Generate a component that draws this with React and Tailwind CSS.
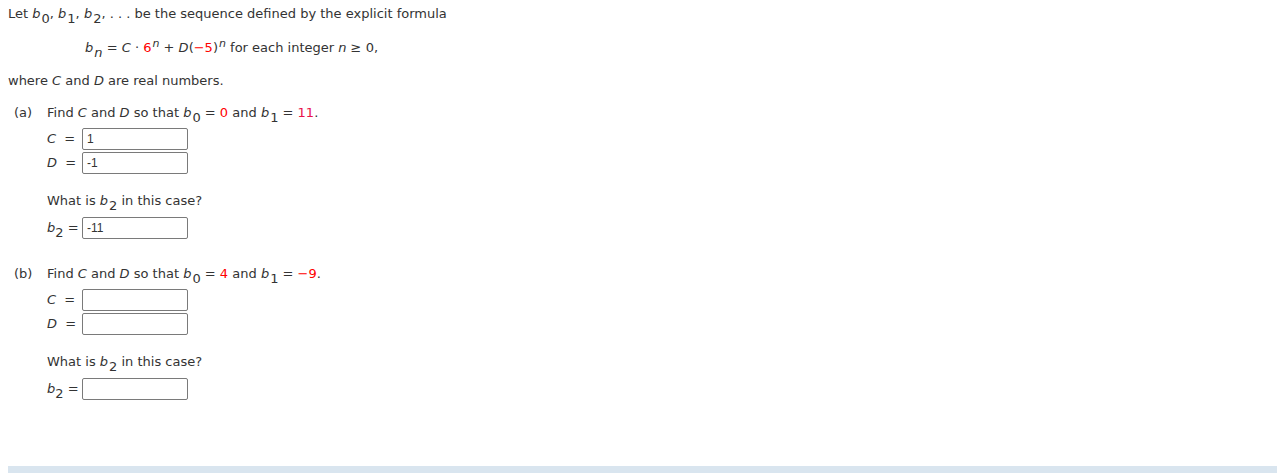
import React from "react";

const V = ({ children }) => <i className="italic">{children}</i>;
const Sub = ({ children }) => (
  <span className="inline-block align-[-5px] text-[13px] leading-[13px] ml-[1px]">{children}</span>
);
const Sup = ({ children }) => (
  <span className="inline-block align-[5px] text-[11px] leading-[11px] italic ml-[1px]">{children}</span>
);
const Red = ({ children }) => <span className="text-[#ff0000]">{children}</span>;

const Field = ({ value }) => (
  <div className="w-[106px] h-[22px] border border-[#7a7a7a] rounded-[2px] bg-white flex items-center pl-[4px] text-[12px] text-[#333] font-['Liberation_Sans',Arial,sans-serif]">
    {value}
  </div>
);

const Row = ({ label, value, className = "" }) => (
  <div className={"flex items-center h-[22px] " + className}>
    <div className="w-[35px] leading-[20px]">{label}</div>
    <Field value={value} />
  </div>
);

const Part = ({ tag, b0, b1, vals }) => (
  <div>
    <div className="flex h-[20px] items-center">
      <span className="w-[47px] pl-[14px]">({tag})</span>
      <span>
        Find <V>C</V> and <V>D</V> so that <V>b</V>
        <Sub>0</Sub> = {b0} and <V>b</V>
        <Sub>1</Sub> = {b1}.
      </span>
    </div>
    <div className="pl-[47px]">
      <Row className="mt-[5px]" label={<><V>C</V>&nbsp; =</>} value={vals[0]} />
      <Row className="mt-[2px]" label={<><V>D</V>&nbsp; =</>} value={vals[1]} />
      <div className="mt-[17px] h-[20px] flex items-center">
        <span>
          What is <V>b</V>
          <Sub>2</Sub> in this case?
        </span>
      </div>
      <Row
        className="mt-[6px]"
        label={
          <span>
            <V>b</V>
            <span className="inline-block align-[-5px] text-[13px] leading-[13px]">2</span> =
          </span>
        }
        value={vals[2]}
      />
    </div>
  </div>
);

export default function App() {
  return (
    <div className="w-[1277px] h-[473px] bg-white relative text-[13px] text-[#333] font-['DejaVu_Sans',Verdana,sans-serif] leading-[20px] overflow-hidden">
      <div className="pl-[8px] pt-[4px]">
        <div className="h-[20px]">
          Let <V>b</V>
          <Sub>0</Sub>, <V>b</V>
          <Sub>1</Sub>, <V>b</V>
          <Sub>2</Sub>, . . . be the sequence defined by the explicit formula
        </div>
        <div className="h-[20px] mt-[14px] pl-[77px]">
          <V>b</V>
          <Sub>
            <i>n</i>
          </Sub>
          &nbsp;= <V>C</V> · <Red>6</Red>
          <Sup>n</Sup> + <V>D</V>(<Red>−5</Red>)<Sup>n</Sup> for each integer <V>n</V> ≥ 0,
        </div>
        <div className="h-[20px] mt-[13px]">
          where <V>C</V> and <V>D</V> are real numbers.
        </div>
      </div>
      <div className="pt-[12px]">
        <Part
          tag="a"
          b0={<Red>0</Red>}
          b1={<span className="text-[#e8134b]">11</span>}
          vals={["1", "-1", "-11"]}
        />
        <div className="mt-[25px]">
          <Part tag="b" b0={<Red>4</Red>} b1={<Red>−9</Red>} vals={["", "", ""]} />
        </div>
      </div>
      <div className="absolute left-[8px] right-0 bottom-0 h-[7px] bg-[#d9e5ef]" />
    </div>
  );
}
